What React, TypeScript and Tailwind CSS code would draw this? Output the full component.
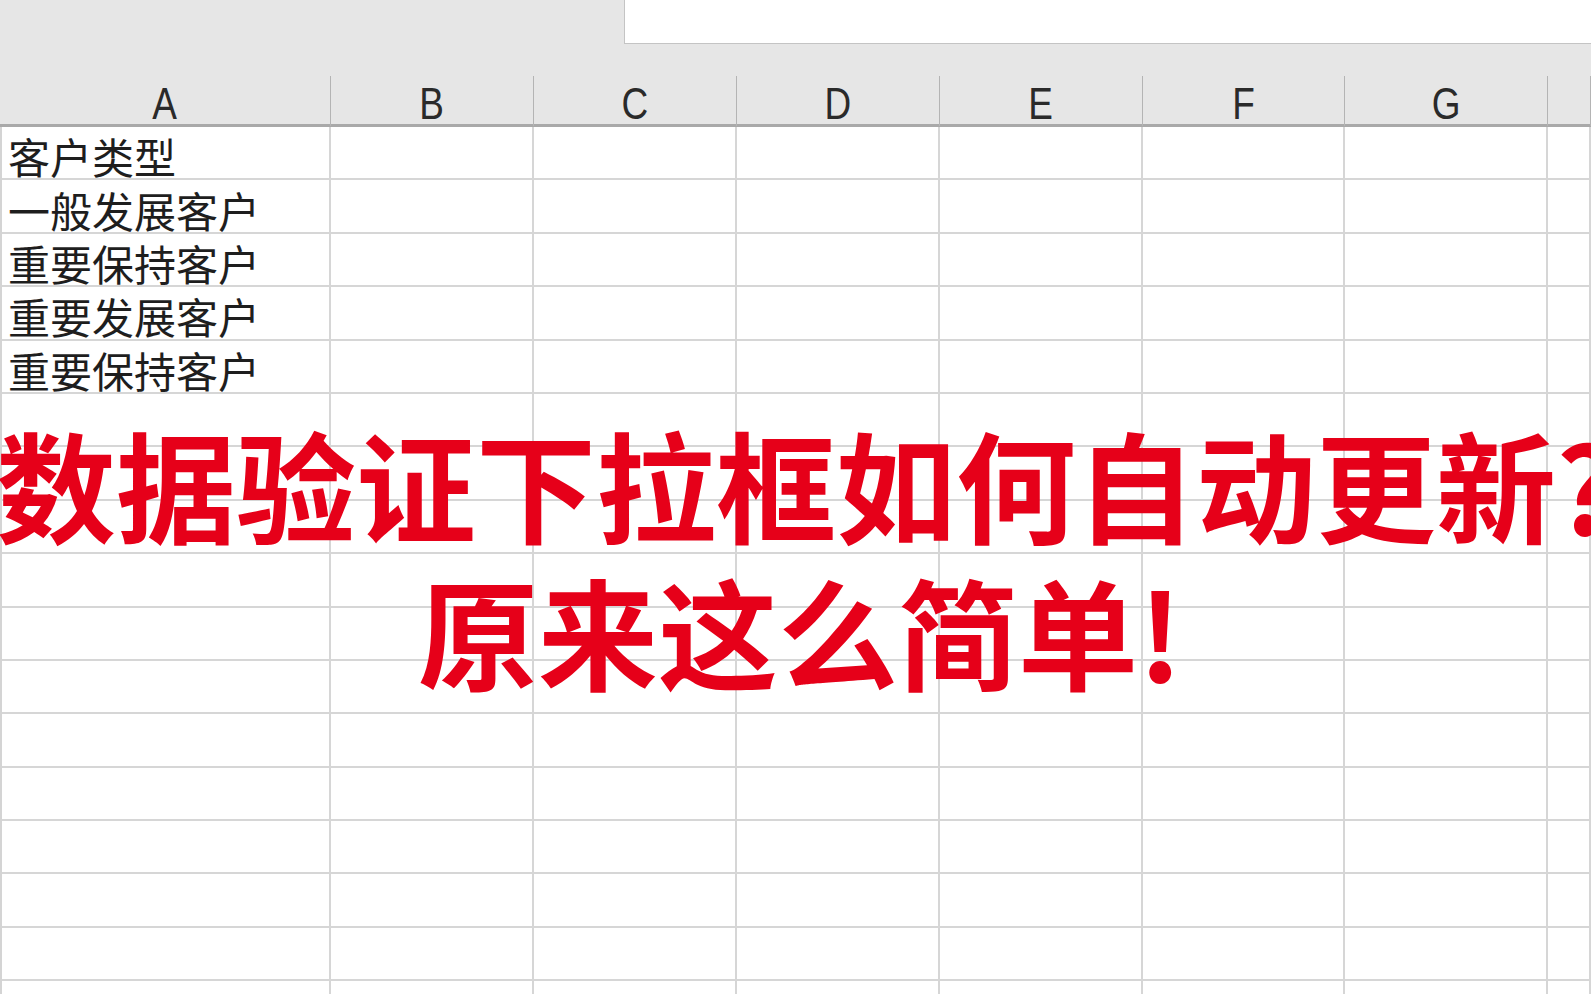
import React from "react"

const columns = ["A", "B", "C", "D", "E", "F", "G", ""]

const cellText = ["客户类型", "一般发展客户", "重要保持客户", "重要发展客户", "重要保持客户"]

const rowCount = 17

function ColumnHeader() {
    return (
        <div className="grid h-[51px] grid-cols-[331px_203px_203px_203px_203px_202px_203px_1fr] border-b-[3px] border-[#a9a9a9] bg-[#e6e6e6]">
            {columns.map((col, i) => (
                <div
                    key={i}
                    className="flex items-center justify-center border-r border-[#b4b4b4] pt-[6px] text-[44px] leading-none text-[#2a2a2a] [font-family:'Liberation_Sans',Arial,sans-serif]"
                >
                    <span className="inline-block scale-x-[0.84]">{col}</span>
                </div>
            ))}
        </div>
    )
}

function SheetBody() {
    const rows = Array.from({ length: rowCount }, (_, i) => i)
    return (
        <div className="border-l-2 border-[#d4d4d4]">
            {rows.map((r) => (
                <div
                    key={r}
                    className="grid h-[53.4px] grid-cols-[329px_203px_203px_203px_203px_202px_203px_1fr]"
                >
                    {columns.map((_, c) => (
                        <div
                            key={c}
                            className="flex items-center overflow-visible whitespace-nowrap border-b-2 border-r-2 border-[#d6d6d6] pl-[6px] pt-[7px] text-[42px] leading-none text-[#1e1e1e] [font-family:'Noto_Sans_CJK_SC',sans-serif]"
                        >
                            {c === 0 && cellText[r] ? cellText[r] : null}
                        </div>
                    ))}
                </div>
            ))}
        </div>
    )
}

export default function App() {
    return (
        <div className="relative h-[994px] w-full overflow-hidden bg-white">
            <div className="h-[76px] bg-[#e6e6e6]">
                <div className="ml-[624px] h-[44px] border-b border-l border-[#c4c4c4] bg-white" />
            </div>
            <ColumnHeader />
            <SheetBody />

            <div className="absolute left-0 right-0 top-[423px] flex flex-col gap-[27px] whitespace-nowrap text-[120px] font-bold leading-[120px] text-[#e60019] [font-family:'Noto_Sans_CJK_SC',sans-serif]">
                <div className="ml-[-4px]">数据验证下拉框如何自动更新?</div>
                <div className="ml-[418px]">原来这么简单!</div>
            </div>
        </div>
    )
}
